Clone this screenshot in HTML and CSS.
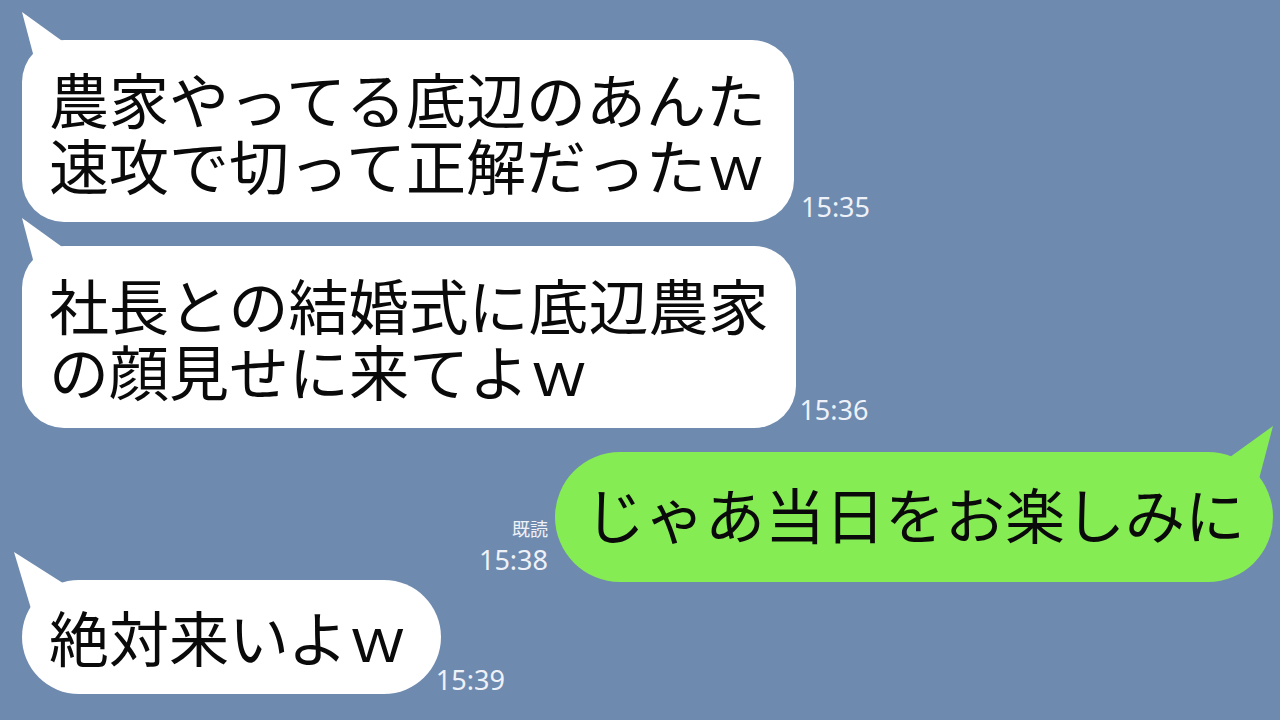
FILE: index.html
```html
<!DOCTYPE html>
<html lang="ja">
<head>
  <meta charset="UTF-8" />
  <meta name="viewport" content="width=device-width, initial-scale=1.0"/>
  <title>トーク</title>
  <link rel="stylesheet" href="styles.css">
</head>
<body>
  <div class="chat">
    <div class="row">
      <div class="bubble">農家やってる底辺のあんた<br>速攻で切って正解だったｗ</div>
      <span class="time">15:35</span>
    </div>

    <div class="row">
      <div class="bubble">社長との結婚式に底辺農家<br>の顔見せに来てよｗ</div>
      <span class="time time-low">15:36</span>
    </div>

    <div class="row row-out">
      <div class="meta">
        <span class="read">既読</span>
        <span class="time">15:38</span>
      </div>
      <div class="bubble bubble-out single">じゃあ当日をお楽しみに</div>
    </div>

    <div class="row row-tight">
      <div class="bubble single short">絶対来いよｗ</div>
      <span class="time time-tuck">15:39</span>
    </div>
  </div>
</body>
</html>
```

FILE: styles.css
```css
* { box-sizing: border-box; }

body {
  margin: 0;
  background-color: #6f8aaf;
  font-family: "Noto Sans CJK JP", "Noto Sans", sans-serif;
  color: #0a0a0a;
  width: 1280px;
  height: 720px;
  overflow: hidden;
}

.chat {
  display: flex;
  flex-direction: column;
  gap: 24px;
  padding: 40px 7px 0 22px;
}

.row {
  display: flex;
  align-items: flex-end;
  gap: 7px;
}

.row-out {
  justify-content: flex-end;
  gap: 7px;
}

.row-tight {
  margin-top: -26px;
}

/* speech bubbles */
.bubble {
  position: relative;
  background-color: #fff;
  font-size: 60px;
  line-height: 66px;
  white-space: nowrap;
  padding: 25px 28px 25px 27px;
  border-radius: 42px;
}

.bubble::before {
  content: "";
  position: absolute;
  left: 0;
  top: -28px;
  width: 44px;
  height: 60px;
  background-color: inherit;
  clip-path: polygon(0 0, 100% 53%, 36% 100%);
}

.bubble.single {
  border-radius: 65px;
  padding: 28px 28px 36px 30px;
}

.bubble.short {
  padding: 23px 33px 25px 27px;
}

.bubble.short::before {
  left: -8px;
  width: 50px;
}

.bubble-out {
  background-color: #86ec53;
}

.bubble-out::before {
  left: auto;
  right: 0;
  top: -26px;
  clip-path: polygon(100% 0, 0 53%, 64% 100%);
}

/* timestamps */
.time {
  font-family: "Noto Sans", "Noto Sans CJK JP", sans-serif;
  font-size: 27px;
  line-height: 26px;
  color: #eef2f8;
  margin-bottom: 2px;
}

.time-low {
  margin-left: -4px;
  margin-bottom: 5px;
}

.time-tuck {
  margin-left: -12px;
  margin-bottom: 1px;
}

.meta {
  display: flex;
  flex-direction: column;
  align-items: flex-end;
  margin-bottom: 9px;
}

.meta .time {
  margin-bottom: 0;
}

.read {
  font-size: 18px;
  line-height: 22px;
  color: #eef2f8;
  margin-bottom: 8px;
}
```
